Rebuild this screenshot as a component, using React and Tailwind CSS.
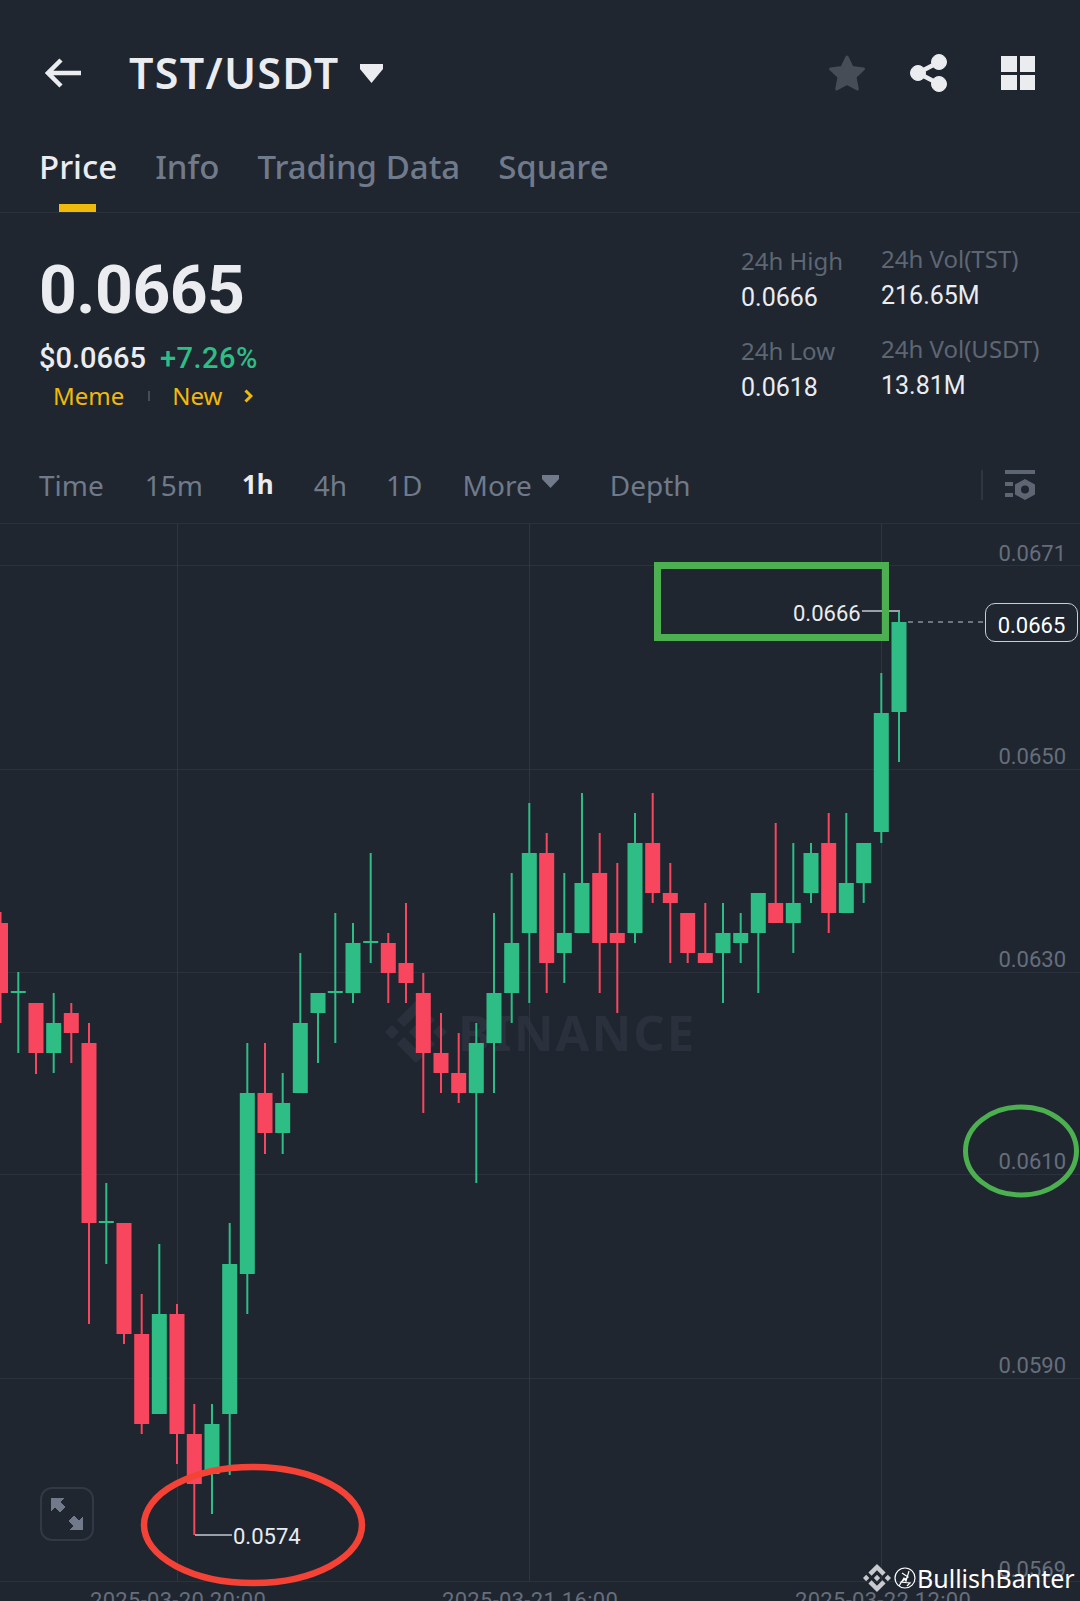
import { SiBinance } from 'react-icons/si';

const GREEN = '#2EBD85';
const RED = '#F9465F';

// x, open-top, body-bottom, wick-top, wick-bottom, up?
const candles = [
    [0.5, 923, 993, 912, 1023, 0], [18.3, 991, 993, 972, 1053, 1], [36, 1003, 1053, 1003, 1074, 0],
    [53.7, 1023, 1053, 993, 1073, 1], [71.3, 1013, 1033, 1003, 1063, 0], [89, 1043, 1223, 1023, 1324, 0],
    [106.3, 1221, 1223, 1183, 1264, 1], [124, 1223, 1334, 1223, 1344, 0], [141.7, 1334, 1424, 1294, 1434, 0],
    [159.3, 1314, 1414, 1244, 1414, 1], [177, 1314, 1434, 1304, 1464, 0], [194.3, 1434, 1484, 1404, 1535, 0],
    [212, 1424, 1474, 1404, 1514, 1], [229.7, 1264, 1414, 1223, 1475, 1], [247.3, 1093, 1274, 1043, 1314, 1],
    [265, 1093, 1133, 1043, 1154, 0], [282.7, 1103, 1133, 1073, 1154, 1], [300.3, 1023, 1093, 953, 1093, 1],
    [318, 993, 1013, 993, 1063, 1], [335.3, 991, 993, 913, 1043, 1], [353, 943, 993, 923, 1003, 1],
    [370.7, 941, 943, 853, 963, 1], [388.3, 943, 973, 933, 1003, 0], [406, 963, 983, 903, 1003, 0],
    [423.3, 993, 1053, 973, 1113, 0], [441, 1053, 1073, 1013, 1093, 0], [458.7, 1073, 1093, 1033, 1103, 0],
    [476.3, 1043, 1093, 1023, 1183, 1], [494, 993, 1043, 913, 1093, 1], [511.7, 943, 993, 873, 1023, 1],
    [529.3, 853, 933, 803, 1003, 1], [546.7, 853, 963, 833, 993, 0], [564.3, 933, 953, 873, 983, 1],
    [582, 883, 933, 793, 933, 1], [599.7, 873, 943, 833, 993, 0], [617.3, 933, 943, 863, 1013, 0],
    [635, 843, 933, 813, 943, 1], [652.7, 843, 893, 793, 903, 0], [670.3, 893, 903, 863, 963, 0],
    [687.7, 913, 953, 913, 963, 0], [705.3, 953, 963, 903, 963, 0], [723, 933, 953, 903, 1003, 1],
    [740.7, 933, 943, 913, 963, 1], [758.3, 893, 933, 893, 993, 1], [775.7, 903, 923, 823, 923, 0],
    [793.3, 903, 923, 843, 953, 1], [811, 853, 893, 843, 903, 1], [828.7, 843, 913, 813, 933, 0],
    [846.3, 883, 913, 813, 913, 1], [863.7, 843, 883, 843, 903, 1], [881.3, 713, 832, 673, 843, 1],
    [899, 622, 712, 612, 762, 1],
];

const gridY = [565, 769, 972, 1174, 1378, 1581];
const gridX = [177, 529, 881];

const ChartDrawing = () => (
    <svg className="absolute inset-0 w-full h-full" viewBox="0 524 1080 1077">
        {gridY.map(y => <rect key={y} x="0" y={y} width="1080" height="1" fill="#2B323D" />)}
        {gridX.map(x => <rect key={x} x={x} y="524" width="1" height="1057" fill="#2F3642" />)}
        {candles.map(([x, top, bottom, wickTop, wickBottom, up]) => {
            const fill = up ? GREEN : RED;
            return (
                <g key={x} fill={fill}>
                    <rect x={x - 1} y={wickTop} width="2" height={wickBottom - wickTop} />
                    <rect x={x - 7.5} y={top} width="15" height={bottom - top} />
                </g>
            );
        })}
        {/* high / low markers */}
        <rect x="862" y="610" width="38" height="2" fill="#9AA0AA" />
        <rect x="195" y="1534" width="37" height="2" fill="#9AA0AA" />
        {/* last price */}
        <line x1="908" y1="622" x2="983" y2="622" stroke="#8A909B" strokeWidth="1.5" strokeDasharray="5 5" />
        {/* annotations */}
        <rect x="657.5" y="565.5" width="228" height="72" fill="none" stroke="#4CAF50" strokeWidth="7" />
        <ellipse cx="253" cy="1525" rx="109" ry="58" fill="none" stroke="#F44336" strokeWidth="6.5" />
        <ellipse cx="1021" cy="1151" rx="55.5" ry="44" fill="none" stroke="#4CAF50" strokeWidth="5" />
    </svg>
);

const StatColumn = ({ items, className }) => (
    <div className={`flex flex-col ${className}`}>
        {items.map(item => (
            <div key={item.label} className="h-[90px]">
                <div className="text-[24px] leading-[34px] text-[#5E6673] whitespace-nowrap">{item.label}</div>
                <div className="mt-[3px] text-[25px] leading-[34px] text-[#EAECEF] whitespace-nowrap font-['Roboto',sans-serif]">{item.value}</div>
            </div>
        ))}
    </div>
);

const axisLabel = 'absolute right-[14px] text-[22px] leading-[26px] text-[#666E7B] font-["Roboto",sans-serif]';
const timeLabel = 'absolute top-[1064px] text-[22px] leading-[26px] tracking-[0.3px] text-[#666E7B] font-["Roboto",sans-serif]';

export default function App() {
    return (
        <div className="h-[1601px] w-[1080px] overflow-hidden flex flex-col bg-[#1F2630] font-['Noto_Sans',sans-serif]">
            {/* Top bar */}
            <div className="h-[146px] flex items-center pl-[45px] pr-[45px]">
                <svg width="36" height="30" viewBox="0 0 36 30" fill="none" stroke="#EAECEF" strokeWidth="4.5">
                    <path d="M36 15H3M16 2L3 15l13 13" />
                </svg>
                <span className="ml-[48px] mb-[2px] text-[43px] leading-none font-semibold tracking-[1.3px] text-[#EAECEF]">TST/USDT</span>
                <svg className="ml-[20px]" width="23" height="19" viewBox="0 0 23 19" fill="#EAECEF">
                    <path d="M0 0h23v5L11.5 19 0 5z" />
                </svg>
                <div className="ml-auto flex items-center">
                    <svg width="38" height="38" viewBox="0 0 38 38" fill="#474D57" stroke="#474D57" strokeWidth="3" strokeLinejoin="round">
                        <path d="M19 3l5 10.5 11.5 1.5-8.5 8 2.300 12L19 29.500 8.700 35 11 23l-8.500-8L14 13.500z" />
                    </svg>
                    <svg className="ml-[44px]" width="37" height="38" viewBox="0 0 37 38" fill="#EAECEF" stroke="#EAECEF">
                        <circle cx="29" cy="8" r="7.500" />
                        <circle cx="29" cy="30" r="7.500" />
                        <circle cx="8" cy="19" r="7.500" />
                        <path d="M29 8L8 19l21 11" fill="none" strokeWidth="4.500" />
                    </svg>
                    <div className="ml-[54px] grid grid-cols-2 gap-[3px] w-[34px] h-[34px]">
                        <div className="bg-[#EAECEF]" />
                        <div className="bg-[#EAECEF]" />
                        <div className="bg-[#EAECEF]" />
                        <div className="bg-[#EAECEF]" />
                    </div>
                </div>
            </div>

            {/* Tabs */}
            <div className="relative h-[67px] shrink-0 flex items-start pl-[39px] gap-[38px] border-b border-[#2B323D] text-[33px] leading-[42px] font-medium text-[#707A8A]">
                <span className="text-[#EAECEF]">Price</span>
                <span>Info</span>
                <span>Trading Data</span>
                <span>Square</span>
                <div className="absolute left-[59px] bottom-0 w-[37px] h-[8px] bg-[#F0B90B]" />
            </div>

            {/* Price summary */}
            <div className="h-[237px] shrink-0 flex">
                <div className="pl-[39px] pt-[36px]">
                    <div className="text-[66px] leading-[84px] font-bold tracking-[-0.5px] text-[#EAECEF] font-['Roboto',sans-serif]">0.0665</div>
                    <div className="flex items-center gap-[14px] mt-[7px] text-[29px] leading-[36px] font-medium font-['Roboto',sans-serif]">
                        <span className="text-[#EAECEF]">$0.0665</span>
                        <span className="tracking-[0.5px] text-[#2EBD85]">+7.26%</span>
                    </div>
                    <div className="flex items-center ml-[14px] mt-[3px] text-[24px] leading-[34px] text-[#F0B90B]">
                        <span>Meme</span>
                        <div className="ml-[24px] w-[2px] h-[10px] bg-[#474D57]" />
                        <span className="ml-[22px]">New</span>
                        <svg className="ml-[22px]" width="9" height="14" viewBox="0 0 9 14" fill="none" stroke="#F0B90B" strokeWidth="3">
                            <path d="M1.500 1.500L7 7l-5.500 5.500" />
                        </svg>
                    </div>
                </div>
                <div className="ml-auto flex pr-[38px]">
                    <StatColumn className="pt-[31px] w-[140px]" items={[{ label: '24h High', value: '0.0666' }, { label: '24h Low', value: '0.0618' }]} />
                    <StatColumn className="pt-[29px] w-[161px]" items={[{ label: '24h Vol(TST)', value: '216.65M' }, { label: '24h Vol(USDT)', value: '13.81M' }]} />
                </div>
            </div>

            {/* Interval bar */}
            <div className="h-[74px] shrink-0 flex items-center pl-[39px] pr-[45px] pb-[4px] border-b border-[#2B323D] text-[28px] text-[#707A8A]">
                <span>Time</span>
                <span className="ml-[41px]">15m</span>
                <span className="ml-[39px] text-[26px] font-bold text-[#EAECEF]">1h</span>
                <span className="ml-[40px]">4h</span>
                <span className="ml-[39px]">1D</span>
                <span className="ml-[40px]">More</span>
                <svg className="ml-[10px] mb-[6px]" width="17" height="13" viewBox="0 0 17 13" fill="#707A8A">
                    <path d="M0 0h17v4l-8.500 9L0 4z" />
                </svg>
                <span className="ml-[51px]">Depth</span>
                <div className="ml-auto w-[2px] h-[30px] bg-[#2F3642]" />
                <svg className="ml-[22px]" width="30" height="30" viewBox="0 0 30 30" fill="#5E6673">
                    <rect x="0" y="0" width="30" height="4" />
                    <rect x="0" y="12" width="8" height="4" />
                    <rect x="0" y="23" width="8" height="4" />
                    <path fillRule="evenodd" d="M20 9l10 5.500v10L20 30l-10-5.500v-10zM20 15.500a4 4 0 100 8 4 4 0 000-8z" />
                </svg>
            </div>

            {/* Chart */}
            <div className="relative flex-1 overflow-hidden">
                {/* Watermark sits under the candles */}
                <SiBinance className="absolute left-[385px] top-[477px] text-[62px] text-[#2A313C]" />
                <span className="absolute left-[458px] top-[476px] text-[49px] leading-[64px] font-bold tracking-[2px] text-[#2A313C]">BINANCE</span>

                <ChartDrawing />

                {/* Price axis */}
                <span className={`${axisLabel} top-[17px]`}>0.0671</span>
                <span className={`${axisLabel} top-[220px]`}>0.0650</span>
                <span className={`${axisLabel} top-[423px]`}>0.0630</span>
                <span className={`${axisLabel} top-[625px]`}>0.0610</span>
                <span className={`${axisLabel} top-[829px]`}>0.0590</span>
                <span className={`${axisLabel} top-[1033px]`}>0.0569</span>

                <div className="absolute left-[985px] top-[79px] w-[93px] h-[39px] pt-[6px] rounded-[10px] border-[1.5px] border-[#C9CCD1] flex items-center justify-center text-[22px] text-white font-['Roboto',sans-serif]">0.0665</div>

                <span className="absolute left-[793px] top-[77px] text-[22px] leading-[26px] text-[#EAECEF] font-['Roboto',sans-serif]">0.0666</span>
                <span className="absolute left-[233px] top-[1000px] text-[22px] leading-[26px] text-[#EAECEF] font-['Roboto',sans-serif]">0.0574</span>

                {/* Time axis */}
                <span className={`${timeLabel} left-[90px]`}>2025-03-20 20:00</span>
                <span className={`${timeLabel} left-[442px]`}>2025-03-21 16:00</span>
                <span className={`${timeLabel} left-[795px]`}>2025-03-22 12:00</span>

                {/* Fullscreen */}
                <div className="absolute left-[40px] top-[963px] w-[54px] h-[54px] rounded-[12px] border-2 border-[#323945] flex items-center justify-center">
                    <svg width="32" height="32" viewBox="0 0 32 32" fill="#707A8A" stroke="#707A8A">
                        <path d="M0 0h13L9 4l5 5-5 5-5-5-4 4z" />
                        <path d="M32 32H19l4-4-5-5 5-5 5 5 4-4z" />
                    </svg>
                </div>

                {/* Source credit */}
                <div className="absolute left-[863px] top-[1039px] flex items-center">
                    <SiBinance className="text-[28px] text-[#C8CACD]" />
                    <svg className="ml-[3px]" width="22" height="22" viewBox="0 0 22 22" fill="none" stroke="#FFFFFF" strokeWidth="1.200">
                        <circle cx="11" cy="11" r="10" />
                        <path d="M5 19l5-8 2 3 3-10M8 6l6 4-7 5 9 1-3 3" />
                    </svg>
                    <span className="ml-[1px] text-[25px] leading-[30px] text-white">BullishBanter</span>
                </div>
            </div>
        </div>
    );
}
